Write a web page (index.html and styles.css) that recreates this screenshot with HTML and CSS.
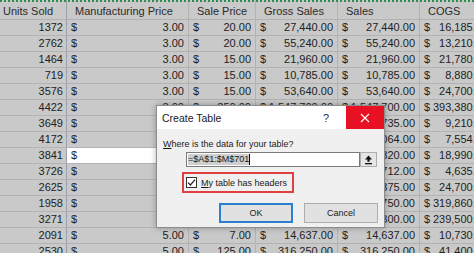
FILE: index.html
```html
<!DOCTYPE html>
<html>
<head>
  <meta charset="UTF-8">
  <title>Create Table</title>
  <link rel="stylesheet" href="styles.css">
</head>
<body>

  <div class="sheet">
    <div class="row head">
      <div class="cell first">Units Sold</div>
      <div class="cell">Manufacturing Price</div>
      <div class="cell">Sale Price</div>
      <div class="cell">Gross Sales</div>
      <div class="cell">Sales</div>
      <div class="cell">COGS</div>
    </div>

    <div class="row">
      <div class="cell first num">1372</div>
      <div class="cell money"><span>$</span><span>3.00</span></div>
      <div class="cell money"><span>$</span><span>20.00</span></div>
      <div class="cell money"><span>$</span><span>27,440.00</span></div>
      <div class="cell money"><span>$</span><span>27,440.00</span></div>
      <div class="cell money"><span>$</span><span>16,185.00</span></div>
    </div>
    <div class="row">
      <div class="cell first num">2762</div>
      <div class="cell money"><span>$</span><span>3.00</span></div>
      <div class="cell money"><span>$</span><span>20.00</span></div>
      <div class="cell money"><span>$</span><span>55,240.00</span></div>
      <div class="cell money"><span>$</span><span>55,240.00</span></div>
      <div class="cell money"><span>$</span><span>13,210.00</span></div>
    </div>
    <div class="row">
      <div class="cell first num">1464</div>
      <div class="cell money"><span>$</span><span>3.00</span></div>
      <div class="cell money"><span>$</span><span>15.00</span></div>
      <div class="cell money"><span>$</span><span>21,960.00</span></div>
      <div class="cell money"><span>$</span><span>21,960.00</span></div>
      <div class="cell money"><span>$</span><span>21,780.00</span></div>
    </div>
    <div class="row">
      <div class="cell first num">719</div>
      <div class="cell money"><span>$</span><span>3.00</span></div>
      <div class="cell money"><span>$</span><span>15.00</span></div>
      <div class="cell money"><span>$</span><span>10,785.00</span></div>
      <div class="cell money"><span>$</span><span>10,785.00</span></div>
      <div class="cell money"><span>$</span><span>8,880.00</span></div>
    </div>
    <div class="row">
      <div class="cell first num">3576</div>
      <div class="cell money"><span>$</span><span>3.00</span></div>
      <div class="cell money"><span>$</span><span>15.00</span></div>
      <div class="cell money"><span>$</span><span>53,640.00</span></div>
      <div class="cell money"><span>$</span><span>53,640.00</span></div>
      <div class="cell money"><span>$</span><span>24,700.00</span></div>
    </div>
    <div class="row">
      <div class="cell first num">4422</div>
      <div class="cell money"><span>$</span><span>3.00</span></div>
      <div class="cell money"><span>$</span><span>350.00</span></div>
      <div class="cell money"><span>$</span><span>1,547,700.00</span></div>
      <div class="cell money"><span>$</span><span>1,547,700.00</span></div>
      <div class="cell money"><span>$</span><span>393,380.00</span></div>
    </div>
    <div class="row">
      <div class="cell first num">3649</div>
      <div class="cell money"><span>$</span><span>3.00</span></div>
      <div class="cell money"><span>$</span><span>15.00</span></div>
      <div class="cell money"><span>$</span><span>54,735.00</span></div>
      <div class="cell money"><span>$</span><span>54,735.00</span></div>
      <div class="cell money"><span>$</span><span>9,210.00</span></div>
    </div>
    <div class="row">
      <div class="cell first num">4172</div>
      <div class="cell money"><span>$</span><span>3.00</span></div>
      <div class="cell money"><span>$</span><span>12.00</span></div>
      <div class="cell money"><span>$</span><span>50,064.00</span></div>
      <div class="cell money"><span>$</span><span>50,064.00</span></div>
      <div class="cell money"><span>$</span><span>7,554.00</span></div>
    </div>
    <div class="row">
      <div class="cell first num">3841</div>
      <div class="cell money active"><span>$</span><span>3.00</span></div>
      <div class="cell money"><span>$</span><span>20.00</span></div>
      <div class="cell money"><span>$</span><span>76,820.00</span></div>
      <div class="cell money"><span>$</span><span>76,820.00</span></div>
      <div class="cell money"><span>$</span><span>18,990.00</span></div>
    </div>
    <div class="row">
      <div class="cell first num">3726</div>
      <div class="cell money"><span>$</span><span>3.00</span></div>
      <div class="cell money"><span>$</span><span>12.00</span></div>
      <div class="cell money"><span>$</span><span>44,712.00</span></div>
      <div class="cell money"><span>$</span><span>44,712.00</span></div>
      <div class="cell money"><span>$</span><span>4,635.00</span></div>
    </div>
    <div class="row">
      <div class="cell first num">2625</div>
      <div class="cell money"><span>$</span><span>3.00</span></div>
      <div class="cell money"><span>$</span><span>15.00</span></div>
      <div class="cell money"><span>$</span><span>39,375.00</span></div>
      <div class="cell money"><span>$</span><span>39,375.00</span></div>
      <div class="cell money"><span>$</span><span>24,700.00</span></div>
    </div>
    <div class="row">
      <div class="cell first num">1958</div>
      <div class="cell money"><span>$</span><span>3.00</span></div>
      <div class="cell money"><span>$</span><span>125.00</span></div>
      <div class="cell money"><span>$</span><span>244,750.00</span></div>
      <div class="cell money"><span>$</span><span>244,750.00</span></div>
      <div class="cell money"><span>$</span><span>319,860.00</span></div>
    </div>
    <div class="row">
      <div class="cell first num">3271</div>
      <div class="cell money"><span>$</span><span>3.00</span></div>
      <div class="cell money"><span>$</span><span>300.00</span></div>
      <div class="cell money"><span>$</span><span>981,300.00</span></div>
      <div class="cell money"><span>$</span><span>981,300.00</span></div>
      <div class="cell money"><span>$</span><span>239,500.00</span></div>
    </div>
    <div class="row">
      <div class="cell first num">2091</div>
      <div class="cell money"><span>$</span><span>5.00</span></div>
      <div class="cell money"><span>$</span><span>7.00</span></div>
      <div class="cell money"><span>$</span><span>14,637.00</span></div>
      <div class="cell money"><span>$</span><span>14,637.00</span></div>
      <div class="cell money"><span>$</span><span>10,730.00</span></div>
    </div>
    <div class="row">
      <div class="cell first num">2530</div>
      <div class="cell money"><span>$</span><span>5.00</span></div>
      <div class="cell money"><span>$</span><span>125.00</span></div>
      <div class="cell money"><span>$</span><span>316,250.00</span></div>
      <div class="cell money"><span>$</span><span>316,250.00</span></div>
      <div class="cell money"><span>$</span><span>41,400.00</span></div>
    </div>

    <div class="dialog">
      <div class="titlebar">
        <span class="title">Create Table</span>
        <span class="help">?</span>
        <span class="close">
          <svg width="10" height="10" viewBox="0 0 10 10">
            <path d="M1 1 L9 9 M9 1 L1 9" stroke="#fff" stroke-width="1.1" fill="none"/>
          </svg>
        </span>
      </div>

      <div class="dialog-body">
        <div class="prompt"><u>W</u>here is the data for your table?</div>

        <div class="ref-row">
          <div class="ref-input"><span class="sel">=$A$1:$M$701</span><span class="caret"></span></div>
          <div class="ref-btn">
            <svg width="9" height="10" viewBox="0 0 9 10">
              <path d="M4.5 0.5 L8 4.5 L5.6 4.5 L5.6 6.8 L3.4 6.8 L3.4 4.5 L1 4.5 Z" fill="#111"/>
              <rect x="1" y="8" width="7" height="1.3" fill="#111"/>
            </svg>
          </div>
        </div>

        <div class="check-wrap">
          <span class="checkbox">
            <svg width="9" height="9" viewBox="0 0 9 9">
              <path d="M1 4.6 L3.4 7 L8 1.6" stroke="#222" stroke-width="1.2" fill="none"/>
            </svg>
          </span>
          <span><u>M</u>y table has headers</span>
        </div>

        <div class="buttons">
          <div class="btn default">OK</div>
          <div class="btn">Cancel</div>
        </div>
      </div>
    </div>
  </div>

</body>
</html>
```

FILE: styles.css
```css
html, body {
  margin: 0;
  padding: 0;
  overflow: hidden;
  background: #c9c9c9;
  font-family: "Liberation Sans", Arial, sans-serif;
}

.sheet {
  position: relative;
  width: 474px;
  height: 253px;
  overflow: hidden;
}

/* green marching-ants marquee along the table range */
.sheet::before {
  content: "";
  position: absolute;
  left: 0;
  right: 0;
  top: 0;
  height: 2px;
  background: repeating-linear-gradient(90deg, #2f8d52 0 2px, transparent 2px 4px);
}

.row {
  display: grid;
  grid-template-columns: 67px 122px 67px 82px 82px 73px;
  height: 16px;
}
.row.head {
  height: 20px;
}

.cell {
  box-sizing: border-box;
  border-right: 1px solid #b3b3b3;
  border-bottom: 1px solid #b3b3b3;
  padding: 0 4px;
  font-size: 11px;
  line-height: 15px;
  color: #222;
  white-space: nowrap;
  overflow: hidden;
}
.head .cell {
  line-height: 22px;
  padding-left: 8px;
  color: #2b2b2b;
}
.head .cell.first {
  padding-left: 3px;
}
.cell.first {
  border-right-color: #98a0aa;
}
.num {
  text-align: right;
  padding-right: 3px;
}
.money {
  display: flex;
  justify-content: space-between;
}
.active {
  background: #fff;
}

/* dialog */
.dialog {
  position: absolute;
  left: 156px;
  top: 105px;
  width: 229px;
  box-sizing: border-box;
  border: 1px solid #8d8d8d;
  background: #f0f0f0;
  box-shadow: 0 0 6px rgba(0,0,0,0.3);
  color: #1a1a1a;
}

.titlebar {
  display: flex;
  align-items: center;
  height: 23px;
  background: #fff;
}
.title {
  flex: 1;
  padding-left: 5px;
  font-size: 10.5px;
}
.help {
  width: 40px;
  text-align: center;
  font-size: 11px;
  color: #333;
}
.close {
  width: 38px;
  height: 23px;
  background: #e81123;
  display: flex;
  align-items: center;
  justify-content: center;
}

.dialog-body {
  padding: 9px 6px 4px 6px;
  font-size: 9px;
}
.prompt {
  line-height: 12px;
}

.ref-row {
  display: flex;
  margin: 2px 0 0 23px;
  height: 15px;
}
.ref-input {
  width: 174px;
  box-sizing: border-box;
  border: 1px solid #7a7a7a;
  background: #fff;
  display: flex;
  align-items: center;
  padding-left: 1px;
}
.ref-input .sel {
  background: #cfcfcf;
  line-height: 11px;
}
.caret {
  width: 1px;
  height: 11px;
  background: #000;
}
.ref-btn {
  width: 17px;
  box-sizing: border-box;
  border: 1px solid #adadad;
  background: #e5e5e5;
  display: flex;
  align-items: center;
  justify-content: center;
}

.check-wrap {
  display: inline-flex;
  align-items: center;
  gap: 4px;
  box-sizing: border-box;
  height: 21px;
  margin: 5px 0 0 19px;
  padding: 0 5px 0 2px;
  border: 2px solid #e04040;
}
.checkbox {
  width: 11px;
  height: 11px;
  box-sizing: border-box;
  border: 1px solid #333;
  background: #fff;
  display: flex;
  align-items: center;
  justify-content: center;
}

.buttons {
  display: flex;
  justify-content: flex-end;
  gap: 11px;
  margin-top: 10px;
}
.btn {
  width: 74px;
  height: 20px;
  box-sizing: border-box;
  border: 1px solid #adadad;
  background: #e1e1e1;
  display: flex;
  align-items: center;
  justify-content: center;
}
.btn.default {
  border: 2px solid #2a7fd0;
}
```
